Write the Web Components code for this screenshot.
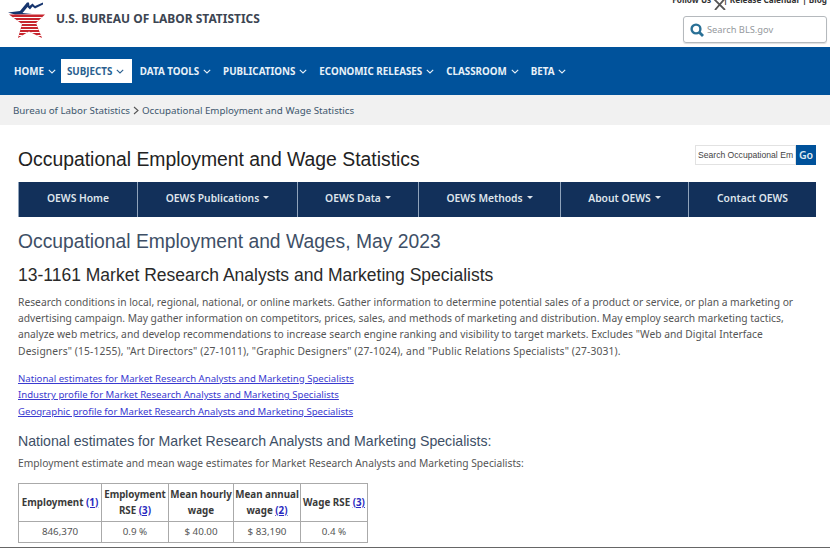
<!DOCTYPE html>
<html><head><meta charset="utf-8">
<style>
html,body{margin:0;padding:0;background:#fff;height:548px;overflow:hidden}
body{font-family:"Noto Sans",sans-serif}
</style></head><body>
<bls-header></bls-header>
<bls-nav></bls-nav>
<bls-crumbs></bls-crumbs>
<oews-title></oews-title>
<oews-nav></oews-nav>
<oews-content></oews-content>
<page-edge></page-edge>
<template id="t-header"><style>
:host{display:flex;justify-content:space-between;height:47px;box-sizing:border-box;padding-left:8px;overflow:hidden}
.logo{display:flex;align-items:flex-start;gap:10px;padding-top:1px}
.name{font:700 11.97px "Noto Sans",sans-serif;color:#3c4552;margin-top:9px}
.r{display:flex;flex-direction:column;align-items:flex-end;width:156px;padding-right:3px;box-sizing:border-box}
.top{font:700 8.2px/8px "Noto Sans",sans-serif;color:#333;margin-top:-4px;height:20px;white-space:nowrap;display:flex;gap:2px;align-items:flex-start}
.top svg{margin:3px -5px 0 0}
.s{width:144px;height:27px;box-sizing:border-box;border:1px solid #b5b9bd;border-radius:3px;box-shadow:0 1px 1px #ddd;display:flex;align-items:center;gap:3px;padding-left:6px;font:9.3px "Noto Sans",sans-serif;color:#95999d}
</style>
<div class="logo"><svg width="38" height="38" viewBox="0 0 38 38">
<defs><clipPath id="st"><path d="M1 13.5 H37 L28 22 L34 37 L21 30.5 L10 37 L14 23 Z"/></clipPath></defs>
<path d="M0 11.5 L12 10 L19 1.5 L21 1.5 L21.5 5 L24.5 2.5 L27 5 L35 1.5 L35 3.5 L27 7.5 L24.5 5.5 L22 8.5 L19.5 6 L14.5 12 L24 13 L7 13.5 Z" fill="#17366f"/>
<g clip-path="url(#st)"><rect width="38" height="38" fill="#c7252e"/><path d="M0 16.5H38M0 19.5H38M0 22.5H38M0 25.5H38M0 28.5H38M0 31.5H38M0 34.5H38" stroke="#fff" stroke-width="1"/></g>
</svg><div class="name">U.S. BUREAU OF LABOR STATISTICS</div></div>
<div class="r"><div class="top"><span>Follow Us</span><svg width="13" height="11" viewBox="0 0 13 11"><path d="M1 0 L12 11 M11.5 0 L2 11" stroke="#555" stroke-width="1.8" fill="none"/></svg><span>| Release Calendar | Blog</span></div>
<div class="s"><svg width="14" height="14" viewBox="0 0 14 14"><circle cx="6" cy="6" r="4.4" fill="none" stroke="#2a7096" stroke-width="2.4"/><path d="M9 9 L13 13" stroke="#2a7096" stroke-width="2.8"/></svg><span>Search BLS.gov</span></div></div>
</template>
<template id="t-nav"><style>
:host{display:flex;align-items:center;height:48px;background:#00529b;padding-left:8px;box-sizing:border-box}
.i{font:700 9.8px "Noto Sans",sans-serif;color:#e8f1f8;padding:0 6px;height:24px;display:flex;align-items:center;gap:4px;white-space:nowrap;box-sizing:border-box}
.i.a{background:#fff;color:#2a5f8f;margin:0 1.5px 0 -1px;padding-right:8px}
svg{width:8px;height:5px}
</style><span id="h"></span></template>
<template id="t-crumbs"><style>
:host{display:flex;align-items:center;height:30px;padding-top:1px;box-sizing:border-box;background:#f1f1f1;padding-left:13px;font:9.75px "Noto Sans",sans-serif;color:#40576e;gap:3px}
</style><span>Bureau of Labor Statistics</span><svg width="6" height="9" viewBox="0 0 6 9"><path d="M1 1 L5 4.5 L1 8" fill="none" stroke="#555" stroke-width="1.1"/></svg><span>Occupational Employment and Wage Statistics</span></template>
<template id="t-title"><style>
:host{display:flex;justify-content:space-between;align-items:flex-start;padding:20px 14px 0 18px;height:57px;box-sizing:border-box}
h1{margin:0;font:400 19.37px/28px "Liberation Sans",sans-serif;color:#222}
.f{display:flex;height:20px}
.inp{width:101px;box-sizing:border-box;border:1px solid #e2e2e2;font:8.6px/18px "Liberation Sans",sans-serif;color:#444;padding:0 0 0 2px;white-space:nowrap}
.go{width:20px;background:#00529b;color:#dfe9f2;font:600 10.6px/20px "Noto Sans",sans-serif;text-align:center}
</style><h1>Occupational Employment and Wage Statistics</h1><div class="f"><div class="inp">Search Occupational Em</div><div class="go">Go</div></div></template>
<template id="t-onav"><style>
:host{display:flex;margin:0 14px 0 18px;height:35px;background:#12305a}
.c{display:flex;align-items:center;justify-content:center;gap:4px;padding-bottom:4px;font:600 10.3px "Noto Sans",sans-serif;color:#dfe5ec;border-left:1px solid #8fa3bb;box-sizing:border-box}
.c:first-child{border-left:0}
.c i{border:3.5px solid transparent;border-top-color:#dfe5ec;border-bottom:0;width:0;height:0}
</style>
<div class="c" style="width:119px">OEWS Home</div>
<div class="c" style="width:160px">OEWS Publications<i></i></div>
<div class="c" style="width:121px">OEWS Data<i></i></div>
<div class="c" style="width:142px">OEWS Methods<i></i></div>
<div class="c" style="width:128px">About OEWS<i></i></div>
<div class="c" style="width:128px">Contact OEWS</div>
</template>
<template id="t-content"><style>
:host{display:block;padding:0 18px;color:#4a4a4a}
h2{margin:13px 0 0;font:400 19.3px/24px "Liberation Sans",sans-serif;color:#3e4f66}
h3{margin:10px 0 0;font:400 17.5px/22px "Liberation Sans",sans-serif;color:#2a2a2a}
p{margin:8px 0 0;font:10.28px/16.2px "Noto Sans",sans-serif;color:#555;width:790px}
p span{letter-spacing:.14px}
.l{margin-top:12px;font:9.6px/16.4px "Noto Sans",sans-serif}
.l a{display:block;color:#3a3ad0;text-decoration:underline}
h4{margin:11px 0 0;font:400 14.13px/20px "Liberation Sans",sans-serif;color:#3e4f66}
.e{margin-top:4px;font:10.26px/16px "Noto Sans",sans-serif;color:#555}
table{margin-top:12px;border-collapse:collapse;font:9.8px/16px "Noto Sans",sans-serif;color:#555}
th,td{border:1px solid #aaa;padding:0;text-align:center;white-space:nowrap}
th{height:37px;color:#3a3a3a}
td{height:20px}
th a{color:#2a2ac0;text-decoration:underline}
</style>
<h2>Occupational Employment and Wages, May 2023</h2>
<h3>13-1161 Market Research Analysts and Marketing Specialists</h3>
<p>Research conditions in local, regional, national, or online markets. Gather information to determine potential sales of a product or service, or plan a marketing or advertising campaign. May gather information on competitors, prices, sales, and methods of marketing and distribution. May employ search marketing tactics, analyze web metrics, and develop recommendations to increase search engine ranking and visibility to target markets. Excludes "Web and Digital Interface <span>Designers" (15-1255), "Art Directors" (27-1011), "Graphic Designers" (27-1024), and "Public Relations Specialists" (27-3031).</span></p>
<div class="l"><a>National estimates for Market Research Analysts and Marketing Specialists</a><a>Industry profile for Market Research Analysts and Marketing Specialists</a><a>Geographic profile for Market Research Analysts and Marketing Specialists</a></div>
<h4>National estimates for Market Research Analysts and Marketing Specialists:</h4>
<div class="e">Employment estimate and mean wage estimates for Market Research Analysts and Marketing Specialists:</div>
<table style="table-layout:fixed;width:350px"><colgroup><col style="width:83px"><col style="width:67px"><col style="width:65px"><col style="width:67px"><col style="width:67px"></colgroup>
<tr><th>Employment <a>(1)</a></th><th>Employment<br>RSE <a>(3)</a></th><th>Mean hourly<br>wage</th><th>Mean annual<br>wage <a>(2)</a></th><th>Wage RSE <a>(3)</a></th></tr>
<tr><td>846,370</td><td>0.9 %</td><td>$ 40.00</td><td>$ 83,190</td><td>0.4 %</td></tr></table>
</template>
<template id="t-edge"><style>
:host{display:block;margin-top:4px;height:2px;background:#666}
</style></template>
<script>
const def=(n,t,init)=>customElements.define(n,class extends HTMLElement{constructor(){super();const r=this.attachShadow({mode:"open"});r.appendChild(document.getElementById(t).content.cloneNode(true));if(init)init(r)}});
const chev='<svg viewBox="0 0 8 5"><path d="M.8 .8 L4 4 L7.2 .8" fill="none" stroke="currentColor" stroke-width="1.1"/></svg>';
def("bls-header","t-header");
def("bls-nav","t-nav",r=>{const h=r.getElementById("h");const f=document.createDocumentFragment();["HOME","SUBJECTS","DATA TOOLS","PUBLICATIONS","ECONOMIC RELEASES","CLASSROOM","BETA"].forEach((t,i)=>{const s=document.createElement("span");s.className="i"+(i==1?" a":"");s.innerHTML=t+chev;f.appendChild(s)});h.replaceWith(f)});
def("bls-crumbs","t-crumbs");
def("oews-title","t-title");
def("oews-nav","t-onav");
def("oews-content","t-content");
def("page-edge","t-edge");
</script>
</body></html>
